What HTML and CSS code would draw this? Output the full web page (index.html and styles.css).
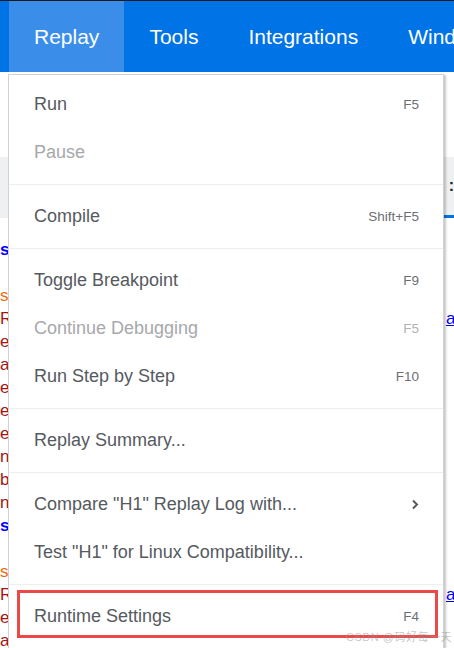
FILE: index.html
```html
<!DOCTYPE html>
<html>
<head>
<meta charset="utf-8">
<link rel="stylesheet" href="styles.css">
</head>
<body>
<div class="app">
  <div class="topline"></div>
  <nav class="nav">
    <div class="tab active">Replay</div>
    <div class="tab">Tools</div>
    <div class="tab">Integrations</div>
    <div class="tab">Window</div>
  </nav>
  <div class="page">
    <div class="toolbar"></div>
    <div class="band">
      <div class="band-left"></div>
      <div class="band-right"><span class="dots">:</span></div>
    </div>
    <div class="code">
      <div class="ln"><span class="kw">st</span><span></span></div>
      <div class="ln"><span></span><span></span></div>
      <div class="ln"><span class="or">st</span><span></span></div>
      <div class="ln"><span class="rd">RI</span><span class="lk">a</span></div>
      <div class="ln"><span class="rd">et</span><span></span></div>
      <div class="ln"><span class="rd">ar</span><span></span></div>
      <div class="ln"><span class="rd">es</span><span></span></div>
      <div class="ln"><span class="rd">ec</span><span></span></div>
      <div class="ln"><span class="rd">et</span><span></span></div>
      <div class="ln"><span class="rd">na</span><span></span></div>
      <div class="ln"><span class="rd">bo</span><span></span></div>
      <div class="ln"><span class="rd">nd</span><span></span></div>
      <div class="ln"><span class="kw">st</span><span></span></div>
      <div class="ln"><span></span><span></span></div>
      <div class="ln"><span class="or">st</span><span></span></div>
      <div class="ln"><span class="rd">RI</span><span class="lk">a</span></div>
      <div class="ln"><span class="rd">et</span><span></span></div>
      <div class="ln"><span class="rd">ar</span><span></span></div>
    </div>
  </div>

  <div class="menu">
    <div class="group">
      <div class="item"><span class="label">Run</span><span class="key">F5</span></div>
      <div class="item disabled"><span class="label">Pause</span><span class="key"></span></div>
    </div>
    <div class="sep"></div>
    <div class="group">
      <div class="item"><span class="label">Compile</span><span class="key">Shift+F5</span></div>
    </div>
    <div class="sep"></div>
    <div class="group">
      <div class="item"><span class="label">Toggle Breakpoint</span><span class="key">F9</span></div>
      <div class="item disabled"><span class="label">Continue Debugging</span><span class="key">F5</span></div>
      <div class="item"><span class="label">Run Step by Step</span><span class="key">F10</span></div>
    </div>
    <div class="sep"></div>
    <div class="group">
      <div class="item"><span class="label">Replay Summary...</span><span class="key"></span></div>
    </div>
    <div class="sep"></div>
    <div class="group">
      <div class="item"><span class="label">Compare "H1" Replay Log with...</span>
        <svg class="chev" width="8" height="11" viewBox="0 0 8 11"><path d="M2 1.5 L6 5.5 L2 9.5" fill="none" stroke="#555a60" stroke-width="2"/></svg>
      </div>
      <div class="item"><span class="label">Test "H1" for Linux Compatibility...</span><span class="key"></span></div>
    </div>
    <div class="sep"></div>
    <div class="group">
      <div class="item highlighted"><span class="label">Runtime Settings</span><span class="key">F4</span><span class="mark"></span></div>
    </div>
  </div>

  <div class="watermark">CSDN @码好每一天</div>
</div>
</body>
</html>
```

FILE: styles.css
```css
* { box-sizing: border-box; }
html, body { margin: 0; padding: 0; background: #ffffff; }
body { font-family: "Liberation Sans", Arial, sans-serif; }

.app {
  position: relative;
  width: 454px;
  height: 648px;
  overflow: hidden;
  background: #ffffff;
}

.topline { height: 1px; background: #1a1a1a; }

.nav {
  display: flex;
  height: 71px;
  background: #0073e6;
  padding-left: 9px;
  white-space: nowrap;
}
.tab {
  display: flex;
  align-items: center;
  padding: 1px 25px 0;
  color: #ffffff;
  font-size: 21px;
  flex: none;
}
.tab.active { background: #3a8eea; }

.page { width: 454px; }
.toolbar { height: 85px; }
.band {
  display: grid;
  grid-template-columns: 444px 1fr;
  height: 61px;
  background: #eff0f2;
}
.band-right {
  border-bottom: 3px solid #0073e6;
  display: flex;
  justify-content: flex-end;
  align-items: center;
  padding-right: 0;
}
.dots { font-size: 16px; font-weight: bold; color: #222; line-height: 1; }

.code { padding-top: 20px; }
.ln {
  display: grid;
  grid-template-columns: 446px 1fr;
  height: 23px;
  line-height: 23px;
  font-size: 17px;
  white-space: nowrap;
  overflow: hidden;
}
.kw { color: #0000ff; font-weight: bold; }
.or { color: #f06a10; }
.rd { color: #a31515; }
.lk { color: #0000ee; text-decoration: underline; }

.menu {
  position: absolute;
  left: 8px;
  top: 74px;
  width: 436px;
  height: 590px;
  background: #ffffff;
  border: 1px solid #d2d2d2;
  box-shadow: 2px 1px 2px rgba(0, 0, 0, 0.22);
  padding-top: 5px;
}
.group { display: flex; flex-direction: column; }
.sep { height: 1px; background: #eeeeee; margin: 8px 0 7px; }
.item {
  position: relative;
  display: flex;
  align-items: center;
  justify-content: space-between;
  height: 48px;
  padding: 0 24px 0 25px;
  font-size: 18px;
  color: #555a60;
}
.item.disabled { color: #a6a8ab; }
.key { font-size: 13.5px; color: #6b6e72; }
.item.disabled .key { color: #b0b2b5; }
.mark {
  position: absolute;
  left: 8px;
  right: 5px;
  top: -2px;
  bottom: 2px;
  border: 3px solid #eb4848;
}

.watermark {
  position: absolute;
  right: 2px;
  bottom: 4px;
  font-size: 11px;
  color: rgba(150, 150, 150, 0.55);
  font-family: "Liberation Sans", "Noto Sans CJK SC", sans-serif;
  letter-spacing: 0.5px;
}
```
